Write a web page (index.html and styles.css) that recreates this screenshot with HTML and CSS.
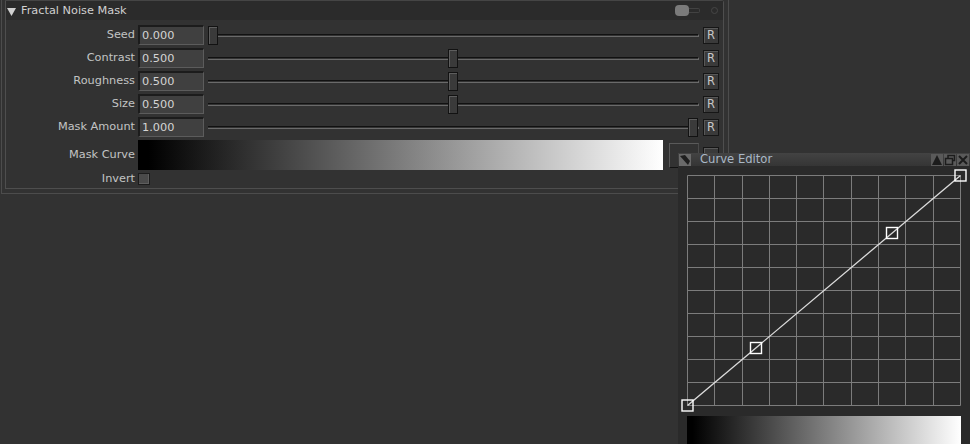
FILE: index.html
```html
<!DOCTYPE html>
<html lang="en">
<head>
    <meta charset="UTF-8">
    <title>Fractal Noise Mask</title>
    <link rel="stylesheet" href="styles.css">
</head>
<body>
    <div class="frame">
        <div class="node">
            <div class="node-head">
                <svg class="twisty" width="9" height="8" viewBox="0 0 9 8"><polygon points="0,0 9,0 4.5,8" fill="#d0d0d0"/></svg>
                <span class="node-title">Fractal Noise Mask</span>
                <span class="head-icons">
                    <span class="pill"></span>
                    <span class="pill-tail"></span>
                    <span class="dot"></span>
                </span>
            </div>

            <div class="row">
                <label class="knob-label">Seed</label>
                <div class="field">0.000</div>
                <div class="slider"><div class="track"><span class="thumb" style="left: calc(0 * (100% - 10px))"></span></div></div>
                <button class="reset">R</button>
            </div>
            <div class="row">
                <label class="knob-label">Contrast</label>
                <div class="field">0.500</div>
                <div class="slider"><div class="track"><span class="thumb" style="left: calc(0.5 * (100% - 10px))"></span></div></div>
                <button class="reset">R</button>
            </div>
            <div class="row">
                <label class="knob-label">Roughness</label>
                <div class="field">0.500</div>
                <div class="slider"><div class="track"><span class="thumb" style="left: calc(0.5 * (100% - 10px))"></span></div></div>
                <button class="reset">R</button>
            </div>
            <div class="row">
                <label class="knob-label">Size</label>
                <div class="field">0.500</div>
                <div class="slider"><div class="track"><span class="thumb" style="left: calc(0.5 * (100% - 10px))"></span></div></div>
                <button class="reset">R</button>
            </div>
            <div class="row">
                <label class="knob-label">Mask Amount</label>
                <div class="field">1.000</div>
                <div class="slider"><div class="track"><span class="thumb" style="left: calc(1 * (100% - 10px))"></span></div></div>
                <button class="reset">R</button>
            </div>

            <div class="row row-curve">
                <label class="knob-label">Mask Curve</label>
                <div class="ramp"></div>
                <button class="curve-btn"></button>
                <button class="reset"></button>
            </div>
            <div class="row row-check">
                <label class="knob-label">Invert</label>
                <span class="check"></span>
            </div>
        </div>
    </div>

    <div class="curve-editor">
        <div class="ce-bar">
            <svg class="ce-icon" width="12" height="12" viewBox="0 0 12 12">
                <rect width="12" height="12" fill="#6a6a6a"/>
                <polygon points="1,2 6,1 11,7 9,11" fill="#1e1e1e"/>
            </svg>
            <span class="ce-title">Curve Editor</span>
            <span class="ce-buttons">
                <span class="ce-btn"><svg width="12" height="12" viewBox="0 0 12 12"><polygon points="6,1 11,11 1,11" fill="#1c1c1c"/></svg></span>
                <span class="ce-btn"><svg width="12" height="12" viewBox="0 0 12 12"><rect x="4" y="1.5" width="6.5" height="5" fill="none" stroke="#1c1c1c" stroke-width="1.5"/><rect x="1.5" y="4.5" width="7" height="6" fill="#5a5a5a" stroke="#1c1c1c" stroke-width="1.5"/></svg></span>
                <span class="ce-btn"><svg width="12" height="12" viewBox="0 0 12 12"><path d="M2 2 L10 10 M10 2 L2 10" stroke="#1c1c1c" stroke-width="2"/></svg></span>
            </span>
        </div>
        <div class="ce-body">
            <svg class="ce-graph" width="292" height="250" viewBox="0 0 292 250">
                <g stroke="#7c7c7c" stroke-width="1">
                    <path d="M9.5 9.5V239.5M36.5 9.5V239.5M64.5 9.5V239.5M91.5 9.5V239.5M118.5 9.5V239.5M145.5 9.5V239.5M173.5 9.5V239.5M200.5 9.5V239.5M227.5 9.5V239.5M255.5 9.5V239.5M282.5 9.5V239.5"/>
                    <path d="M9.5 9.5H282.5M9.5 32.5H282.5M9.5 55.5H282.5M9.5 78.5H282.5M9.5 101.5H282.5M9.5 124.5H282.5M9.5 147.5H282.5M9.5 170.5H282.5M9.5 193.5H282.5M9.5 216.5H282.5M9.5 239.5H282.5"/>
                </g>
                <line x1="9.5" y1="239.5" x2="282.5" y2="9.5" stroke="#dcdcdc" stroke-width="1.3"/>
                <g fill="none" stroke="#ffffff" stroke-width="1.4">
                    <rect x="4" y="234" width="11" height="11"/>
                    <rect x="72.5" y="176.5" width="11" height="11"/>
                    <rect x="208.5" y="61.5" width="11" height="11"/>
                    <rect x="277" y="4" width="11" height="11"/>
                </g>
            </svg>
            <div class="ce-ramp"></div>
        </div>
    </div>
</body>
</html>
```

FILE: styles.css
```css
body {
    margin: 0;
    background-color: #323232;
    font-family: "DejaVu Sans", Verdana, sans-serif;
    font-size: 11.3px;
    color: #c2c4c4;
    height: 444px;
    overflow: hidden;
}

.frame {
    margin-left: 1px;
    width: 728px;
    height: 194px;
    box-sizing: border-box;
    border: 1px solid #4c4c4c;
    border-top: none;
    padding: 0 4px 4px 3px;
}

.node {
    height: 189px;
    box-sizing: border-box;
    border: 1px solid #4e4e4e;
    border-top-color: #454545;
    border-radius: 0 3px 0 0;
}

.node-head {
    display: flex;
    align-items: center;
    height: 19px;
    background-color: #2b2b2b;
    padding-left: 1px;
}

.twisty {
    margin-right: 5px;
    margin-top: 2px;
}

.node-title {
    color: #d0d0d0;
}

.head-icons {
    margin-left: auto;
    margin-right: 5px;
    display: flex;
    align-items: center;
}

.pill {
    width: 14px;
    height: 11px;
    border-radius: 4px;
    background-color: #7a7a7a;
}

.pill-tail {
    width: 10px;
    height: 3px;
    border: 1px solid #424242;
    border-left: none;
    border-radius: 0 2px 2px 0;
}

.dot {
    width: 5px;
    height: 5px;
    margin-left: 11px;
    border: 1px solid #464646;
    border-radius: 50%;
}

.row {
    display: flex;
    align-items: center;
    height: 20px;
    margin-top: 3px;
}

.row:nth-child(2) {
    margin-top: 5px;
}

.knob-label {
    width: 129px;
    text-align: right;
    line-height: 20px;
    flex-shrink: 0;
}

.field {
    width: 66px;
    height: 20px;
    margin-left: 3px;
    box-sizing: border-box;
    background-color: #404040;
    border-top: 2px solid #1c1c1c;
    border-left: 2px solid #1c1c1c;
    border-right: 1px solid #5c5c5c;
    border-bottom: 1px solid #5c5c5c;
    padding-left: 2px;
    line-height: 17px;
    color: #d4d4d4;
}

.slider {
    width: 491px;
    margin-left: 4px;
    height: 20px;
    display: flex;
    align-items: center;
}

.track {
    position: relative;
    width: 100%;
    height: 1px;
    background-color: #323232;
    border-top: 1px solid #111111;
    border-bottom: 1px solid #6a6a6a;
    border-right: 1px solid #6a6a6a;
}

.thumb {
    position: absolute;
    top: -9px;
    width: 10px;
    height: 19px;
    box-sizing: border-box;
    background-color: #3a3a3a;
    border: 1px solid #121212;
    box-shadow: inset 1px 1px #5e5e5e;
}

.reset {
    width: 16px;
    height: 17px;
    margin-left: 4px;
    padding: 0;
    box-sizing: border-box;
    background-color: #3a3a3a;
    border: 1px solid #161616;
    box-shadow: inset 1px 1px #585858;
    color: #c8c8c8;
    font-family: "DejaVu Sans", Verdana, sans-serif;
    font-size: 11.5px;
    line-height: 14px;
}

.row-curve {
    height: 30px;
}

.ramp {
    width: 525px;
    height: 30px;
    margin-left: 3px;
    background: linear-gradient(to right, #000000 2%, #ffffff 100%);
}

.curve-btn {
    width: 30px;
    height: 25px;
    margin-left: 6px;
    padding: 0;
    background-color: #323232;
    border: 1px solid #5a5a5a;
    border-bottom-color: #111111;
    border-right-color: #4a4a4a;
}

.row-check {
    height: 12px;
}

.check {
    width: 12px;
    height: 12px;
    margin-left: 3px;
    box-sizing: border-box;
    background-color: #4a4a4a;
    border: 1px solid #1c1c1c;
    box-shadow: inset -1px -1px #5e5e5e;
}

.curve-editor {
    position: absolute;
    left: 678px;
    top: 153px;
    width: 292px;
    height: 291px;
    background-color: #2a2a2a;
    overflow: hidden;
}

.ce-bar {
    display: flex;
    align-items: center;
    height: 13px;
    background: linear-gradient(#434343, #353535);
}

.ce-icon {
    margin-left: 1px;
}

.ce-title {
    margin-left: 9px;
    color: #aab8c6;
    line-height: 13px;
    font-size: 11.6px;
}

.ce-buttons {
    margin-left: auto;
    margin-right: 1px;
    display: flex;
    gap: 1px;
}

.ce-btn {
    display: block;
    width: 12px;
    height: 12px;
    background-color: #5a5a5a;
}

.ce-btn svg {
    display: block;
}

.ce-graph {
    display: block;
}

.ce-ramp {
    margin-left: 9px;
    width: 274px;
    height: 28px;
    background: linear-gradient(to right, #000000 2%, #ffffff 100%);
}
```
